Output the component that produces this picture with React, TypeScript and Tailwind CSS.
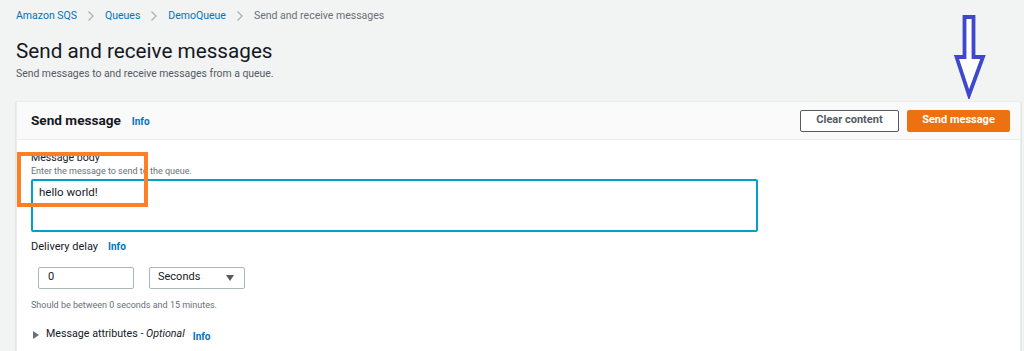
import type { ReactElement } from 'react';

const FONT = "font-['Roboto',Arial,sans-serif]";

function Chevron(): ReactElement {
  return (
    <svg width="8" height="12" viewBox="0 0 8 12" className="mx-[10px]">
      <path d="M1.5 1.5 L6 6 L1.5 10.5" fill="none" stroke="#aab7b8" strokeWidth="1.4" />
    </svg>
  );
}

function Info(): ReactElement {
  return <span className="text-[10px] font-bold text-[#0073bb]">Info</span>;
}

function Breadcrumbs(): ReactElement {
  const links = ['Amazon SQS', 'Queues', 'DemoQueue'];
  return (
    <nav className="flex items-center text-[10.5px] leading-none">
      {links.map((l) => (
        <span key={l} className="flex items-center">
          <span className="text-[#0073bb]">{l}</span>
          <Chevron />
        </span>
      ))}
      <span className="text-[#687078]">Send and receive messages</span>
    </nav>
  );
}

function Arrow(): ReactElement {
  return (
    <svg
      width="34"
      height="84"
      viewBox="0 0 34 84"
      className="absolute left-[953px] top-[15px]"
    >
      <path
        d="M11.5 2 H20.5 V42 H30 L16 80 L3.5 42 H11.5 Z"
        fill="#ffffff"
        stroke="#3f48cc"
        strokeWidth="3.8"
        strokeLinejoin="miter"
      />
    </svg>
  );
}

export default function App(): ReactElement {
  return (
    <div className={`relative h-[351px] w-[1024px] overflow-hidden bg-[#f2f3f3] ${FONT}`}>
      <div className="px-4 pt-[10px]">
        <Breadcrumbs />
        <h1 className="mt-[16px] text-[20.7px] leading-[26px] text-[#16191f]">
          Send and receive messages
        </h1>
        <p className="mt-[3px] text-[10.4px] leading-[14px] text-[#545b64]">
          Send messages to and receive messages from a queue.
        </p>
      </div>

      <section className="ml-4 mr-[3px] mt-[20px] border border-[#eaeded] bg-white shadow-[0_1px_1px_rgba(0,28,36,0.3)]">
        <header className="flex h-[38px] items-center justify-between border-b border-[#eaeded] bg-[#fafafa] pl-[14px] pr-[10px]">
          <div className="flex items-baseline gap-[11px]">
            <h2 className="text-[13.6px] font-bold text-[#16191f]">Send message</h2>
            <Info />
          </div>
          <div className="flex items-center gap-[8px]">
            <button className="h-[22px] w-[99px] rounded-[2px] border border-[#545b64] bg-white text-[11px] font-bold text-[#545b64]">
              Clear content
            </button>
            <button className="h-[22px] w-[103px] rounded-[2px] bg-[#ec7211] text-[11px] font-bold text-white">
              Send message
            </button>
          </div>
        </header>

        <div className="pl-[14px] pr-[262px] pt-[11px]">
          <div className="relative">
            <label className="block text-[10.6px] leading-[14px] text-[#16191f]">Message body</label>
            <p className="text-[9px] leading-[12px] text-[#687078]">
              Enter the message to send to the queue.
            </p>
            <div className="mt-[2px] h-[53px] rounded-[2px] border-2 border-[#00a1c9] px-[6px] pt-[3px] text-[11.5px] leading-[16px] text-[#16191f]">
              hello world!
            </div>
            <div className="absolute left-[-14px] top-[1px] h-[55px] w-[131px] border-[4px] border-[#ff7f27]" />
          </div>

          <div className="mt-[7px] flex items-baseline gap-[10px]">
            <span className="text-[11px] text-[#16191f]">Delivery delay</span>
            <Info />
          </div>
          <div className="mt-[11px] flex gap-[15px] pl-[7px]">
            <div className="flex h-[22px] w-[96px] items-center rounded-[2px] border border-[#aab7b8] px-[9px] text-[11px] text-[#16191f]">
              0
            </div>
            <div className="flex h-[22px] w-[96px] items-center justify-between rounded-[2px] border border-[#aab7b8] pl-[8px] pr-[10px] text-[11px] text-[#16191f]">
              <span>Seconds</span>
              <svg width="8" height="6" viewBox="0 0 8 6">
                <path d="M0 0 H8 L4 6 Z" fill="#545b64" />
              </svg>
            </div>
          </div>
          <p className="mt-[10px] text-[9px] leading-[12px] text-[#687078]">
            Should be between 0 seconds and 15 minutes.
          </p>

          <div className="mt-[12px] flex items-center gap-[7px] pb-[20px]">
            <svg width="6" height="8" viewBox="0 0 6 8" className="ml-[2px]">
              <path d="M0 0 L6 4 L0 8 Z" fill="#687078" />
            </svg>
            <span className="text-[10.7px] text-[#16191f]">
              Message attributes - <i>Optional</i>
            </span>
            <span className="ml-[1px]">
              <Info />
            </span>
          </div>
        </div>
      </section>

      <Arrow />
    </div>
  );
}
